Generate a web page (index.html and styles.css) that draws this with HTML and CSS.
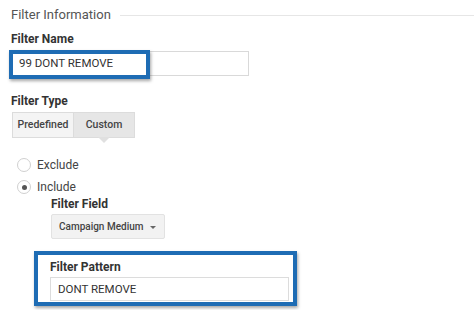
FILE: index.html
```html
<!DOCTYPE html>
<html>
<head>
<meta charset="utf-8">
<link rel="stylesheet" href="styles.css">
</head>
<body>
<div class="page">
  <div class="section-head">
    <span class="section-title">Filter Information</span>
    <span class="section-line"></span>
  </div>

  <div class="label name-label">Filter Name</div>
  <div class="name-row">
    <div class="input wide">99 DONT REMOVE</div>
    <div class="highlight hl-name"></div>
  </div>

  <div class="label type-label">Filter Type</div>
  <div class="btn-group">
    <div class="btn">Predefined</div>
    <div class="btn active">Custom<span class="pointer"></span></div>
  </div>

  <div class="radios">
    <div class="radio-row"><span class="radio"></span><span class="radio-text">Exclude</span></div>
    <div class="radio-row"><span class="radio checked"></span><span class="radio-text">Include</span></div>
  </div>

  <div class="sub">
    <div class="label field-label">Filter Field</div>
    <div class="dropdown">Campaign Medium<span class="caret"></span></div>
  </div>

  <div class="pattern-box">
    <div class="label pattern-label">Filter Pattern</div>
    <div class="input pattern-input">DONT REMOVE</div>
  </div>
</div>
</body>
</html>
```

FILE: styles.css
```css
html, body {
  margin: 0;
  padding: 0;
  background: #ffffff;
}
body {
  font-family: Roboto, "Liberation Sans", sans-serif;
  color: #333;
  width: 474px;
  height: 310px;
  overflow: hidden;
}
.page {
  padding-left: 11px;
  display: flex;
  flex-direction: column;
  align-items: flex-start;
}
.section-head {
  display: flex;
  align-items: center;
  width: 463px;
  height: 28px;
}
.section-title {
  font-size: 13px;
  color: #555;
  font-weight: 400;
}
.section-line {
  flex: 1;
  height: 1px;
  background: #e6e6e6;
  margin-left: 9px;
  margin-top: 2px;
}
.label {
  font-size: 12px;
  font-weight: 700;
  color: #333;
  line-height: 14px;
}
.name-label {
  margin-top: 4px;
}
.name-row {
  position: relative;
  margin-top: 5px;
}
.input {
  box-sizing: border-box;
  border: 1px solid #d9d9d9;
  background: #fff;
  font-size: 11.5px;
  color: #333;
  height: 25px;
  line-height: 23px;
  padding-left: 7px;
}
.wide {
  width: 238px;
}
.highlight {
  position: absolute;
  border: 4px solid #1e6cb4;
  box-shadow: 1px 2px 3px rgba(0,0,0,0.35);
}
.hl-name {
  left: -2px;
  top: -1px;
  width: 133px;
  height: 21px;
}
.type-label {
  margin-top: 18px;
}
.btn-group {
  display: flex;
  margin-top: 4px;
  margin-left: 1px;
  border: 1px solid #dcdcdc;
}
.btn {
  position: relative;
  font-size: 10.5px;
  font-weight: 500;
  color: #444;
  background: #f4f4f4;
  height: 24px;
  line-height: 24px;
  width: 60px;
  text-align: center;
}
.btn.active {
  background: #e6e6e6;
  border-left: 1px solid #dcdcdc;
}
.pointer {
  position: absolute;
  left: 24px;
  bottom: -6px;
  width: 0;
  height: 0;
  border-left: 6px solid transparent;
  border-right: 6px solid transparent;
  border-top: 6px solid #e0e0e0;
}
.radios {
  margin-top: 20px;
  margin-left: 6px;
  display: flex;
  flex-direction: column;
  gap: 8px;
}
.radio-row {
  display: flex;
  align-items: center;
  height: 14px;
}
.radio {
  box-sizing: border-box;
  width: 14px;
  height: 14px;
  border-radius: 50%;
  border: 1px solid #d0d0d0;
  background: #fff;
  position: relative;
}
.radio.checked::after {
  content: "";
  position: absolute;
  left: 3.5px;
  top: 3.5px;
  width: 5px;
  height: 5px;
  border-radius: 50%;
  background: #555;
}
.radio-text {
  margin-left: 6px;
  font-size: 12px;
  color: #444;
}
.sub {
  margin-left: 40px;
  margin-top: 3px;
  display: flex;
  flex-direction: column;
  align-items: flex-start;
}
.dropdown {
  margin-top: 3px;
  box-sizing: border-box;
  height: 25px;
  width: 114px;
  background: #f2f2f2;
  border: 1px solid #e2e2e2;
  border-radius: 2px;
  font-size: 10px;
  font-weight: 500;
  color: #444;
  line-height: 23px;
  padding-left: 7px;
  position: relative;
}
.caret {
  position: absolute;
  right: 8px;
  top: 11px;
  border-left: 3px solid transparent;
  border-right: 3px solid transparent;
  border-top: 3px solid #666;
}
.pattern-box {
  margin-top: 12px;
  margin-left: 23px;
  box-sizing: border-box;
  width: 263px;
  height: 55px;
  border: 4px solid #1e6cb4;
  box-shadow: 1px 2px 3px rgba(0,0,0,0.35);
  padding: 5px 0 0 12px;
}
.pattern-input {
  margin-top: 3px;
  width: 239px;
  height: 24px;
  line-height: 22px;
  border-color: #dcdcdc;
}
```
